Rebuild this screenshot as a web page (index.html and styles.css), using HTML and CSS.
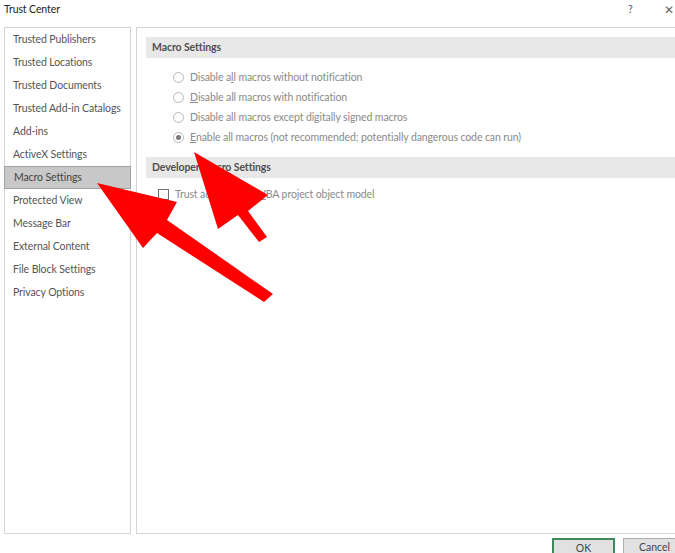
FILE: index.html
```html
<!DOCTYPE html>
<html lang="en">
<head>
<title>Trust Center</title>
<meta charset="utf-8">
<link rel="stylesheet" href="styles.css">
</head>
<body>

<div class="dialog">
  <div class="titlebar">
    <span class="title">Trust Center</span>
    <span class="help">?</span>
    <span class="close">&#x2715;</span>
  </div>

  <div class="main">
    <ul class="nav">
      <li>Trusted Publishers</li>
      <li>Trusted Locations</li>
      <li>Trusted Documents</li>
      <li>Trusted Add-in Catalogs</li>
      <li>Add-ins</li>
      <li>ActiveX Settings</li>
      <li class="selected">Macro Settings</li>
      <li>Protected View</li>
      <li>Message Bar</li>
      <li>External Content</li>
      <li>File Block Settings</li>
      <li>Privacy Options</li>
    </ul>

    <div class="panel">
      <div class="section-head">Macro Settings</div>
      <div class="options">
        <div class="row"><span class="radio"></span>Disable a<u>l</u>l macros without notification</div>
        <div class="row"><span class="radio"></span><u>D</u>isable all macros with notification</div>
        <div class="row"><span class="radio"></span>Disable all macros except di<u>g</u>itally signed macros</div>
        <div class="row"><span class="radio checked"></span><u>E</u>nable all macros (not recommended; potentially dangerous code can run)</div>
      </div>

      <div class="section-head">Developer Macro Settings</div>
      <div class="options dev">
        <div class="row"><span class="check"></span>Trust access to the <u>V</u>BA project object model</div>
      </div>
    </div>
  </div>

  <div class="footer">
    <button class="btn ok">OK</button>
    <button class="btn">Cancel</button>
  </div>
</div>

<!-- red annotation arrows drawn over the dialog -->
<svg class="arrows" width="675" height="553" viewBox="0 0 675 553">
  <polygon fill="#ff0000" points="97,183 177,202 167,220 273,294 264,302 157,233 143,248"/>
  <polygon fill="#ff0000" points="194,152 268,195 248,211 267,237 259,242 238,215 218,229"/>
</svg>

</body>
</html>
```

FILE: styles.css
```css
* {
  box-sizing: border-box;
}

body {
  margin: 0;
  width: 675px;
  height: 553px;
  overflow: hidden;
  background: #ffffff;
  font-family: Lato, "Noto Sans", sans-serif;
  font-size: 10.5px;
  letter-spacing: -0.1px;
  color: #555555;
  position: relative;
}

.dialog {
  display: flex;
  flex-direction: column;
  height: 553px;
}

/* Title bar */
.titlebar {
  flex-shrink: 0;
  height: 27px;
  display: flex;
  align-items: center;
  padding: 0 0 9px 4px;
}

.title {
  color: #222222;
  flex: 1;
}

.help {
  color: #555555;
  width: 36px;
}

.close {
  color: #666666;
  font-size: 12px;
  width: 11px;
}

/* Left navigation + right panel */
.main {
  flex-shrink: 0;
  display: flex;
  gap: 5px;
  padding-left: 4px;
  height: 507px;
}

.nav {
  list-style: none;
  margin: 0;
  padding: 0;
  width: 127px;
  border: 1px solid #d4d4d4;
}

.nav li {
  height: 23px;
  line-height: 23px;
  padding-left: 8px;
  white-space: nowrap;
}

.nav li.selected {
  background: #c8c8c8;
  border: 1px solid #a3a3a3;
  margin: 0 -1px;
  padding-left: 9px;
  line-height: 21px;
  color: #444444;
}

.panel {
  flex: 1;
  border-top: 1px solid #d4d4d4;
  border-left: 1px solid #d4d4d4;
  border-bottom: 1px solid #d4d4d4;
  padding: 9px 0 0 9px;
}

.section-head {
  height: 21px;
  line-height: 20px;
  background: #e8e8e8;
  padding-left: 6px;
  font-weight: bold;
  color: #505050;
}

.options {
  padding: 9px 0 10px 27px;
}

.options.dev {
  padding: 6px 0 0 12px;
}

.row {
  height: 20px;
  line-height: 19px;
  display: flex;
  align-items: center;
  color: #8a8a8a;
  white-space: nowrap;
}

.radio {
  width: 11px;
  height: 11px;
  border: 1px solid #b8b8b8;
  border-radius: 50%;
  margin-right: 6px;
  display: flex;
  align-items: center;
  justify-content: center;
}

.radio.checked::after {
  content: "";
  width: 5px;
  height: 5px;
  border-radius: 50%;
  background: #7a7a7a;
}

.check {
  width: 11px;
  height: 11px;
  border: 1px solid #6e6e6e;
  margin-right: 6px;
}

/* Buttons */
.footer {
  flex-shrink: 0;
  display: flex;
  justify-content: flex-end;
  gap: 8px;
  padding-top: 4px;
  margin-right: -11px;
}

.btn {
  font-family: inherit;
  font-size: 10.5px;
  line-height: 16px;
  color: #444444;
  background: #e1e1e1;
  border: 1px solid #adadad;
  height: 23px;
  width: 63px;
  padding: 0 0 5px;
}

.btn.ok {
  border: 2px solid #3f8a5d;
}

.arrows {
  position: absolute;
  left: 0;
  top: 0;
  pointer-events: none;
}
```
